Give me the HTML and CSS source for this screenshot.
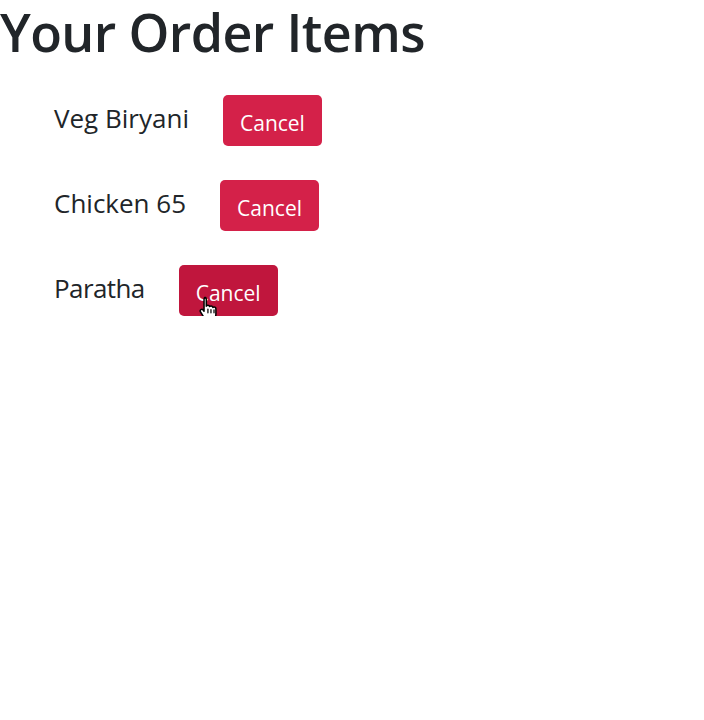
FILE: index.html
```html
<!DOCTYPE html>
<html>
<head>
<meta charset="utf-8">
<link rel="stylesheet" href="styles.css">
</head>
<body>
<h1 class="title">Your Order Items</h1>
<ul class="items">
  <li class="item"><span class="name">Veg Biryani</span><button class="btn">Cancel</button></li>
  <li class="item"><span class="name">Chicken 65</span><button class="btn">Cancel</button></li>
  <li class="item"><span class="name name-p">Paratha</span><span class="btn-wrap"><button class="btn btn-hover">Cancel</button><svg class="cursor" width="19" height="27" viewBox="0 0 20 28"><path d="M6 1.5c1 0 1.7.7 1.7 1.7v7.3c.4-.6 1-.9 1.7-.9 1 0 1.6.6 1.8 1.3.4-.4.9-.6 1.5-.6 1 0 1.7.7 1.9 1.5.4-.3.8-.4 1.3-.4 1.1 0 1.9.9 1.9 2v5.3c0 3.8-2.6 6.3-6.3 6.3H10c-2.2 0-3.6-.9-4.8-2.6L1.6 16.6c-.6-.9-.4-2 .4-2.5.8-.5 1.8-.3 2.4.5l.9 1.2V3.2c0-1 .7-1.7 1.7-1.7z" fill="#fff" stroke="#000" stroke-width="1.6" stroke-linejoin="round"/><path d="M9.4 13.5v4M12.6 14v3.5M15.8 14.5v3" stroke="#000" stroke-width="1.3" stroke-linecap="round"/></svg></span></li>
</ul>
</body>
</html>
```
FILE: styles.css
```css
html, body {
  margin: 0;
  padding: 0;
  background: #fff;
}
body {
  font-family: "Open Sans", "Noto Sans", sans-serif;
  color: #212529;
}
.title {
  margin: 0;
  padding-top: 0;
  font-size: 52px;
  font-weight: 600;
  line-height: 66px;
  margin-top: -1px;
  letter-spacing: -0.6px;
}
.items {
  list-style: none;
  margin: 30px 0 0 0;
  padding: 0 0 0 54px;
  display: flex;
  flex-direction: column;
  gap: 34px;
}
.item {
  display: flex;
  align-items: center;
  height: 51px;
  gap: 34px;
}
.name {
  font-size: 26px;
  letter-spacing: 0;
  position: relative;
  top: -3px;
}
.name-p {
  letter-spacing: -0.6px;
}
.btn-wrap {
  position: relative;
  display: block;
  height: 51px;
}
.btn {
  display: block;
  width: 99px;
  height: 51px;
  border: 0;
  border-radius: 5px;
  background: #d42149;
  color: #fff;
  font-family: "Open Sans", "Noto Sans", sans-serif;
  font-size: 21px;
  padding: 4px 0 0 0;
  letter-spacing: 0;
}
.btn-hover {
  background: #c0163d;
}
.cursor {
  position: absolute;
  left: 20px;
  top: 31px;
  z-index: 2;
}
```
